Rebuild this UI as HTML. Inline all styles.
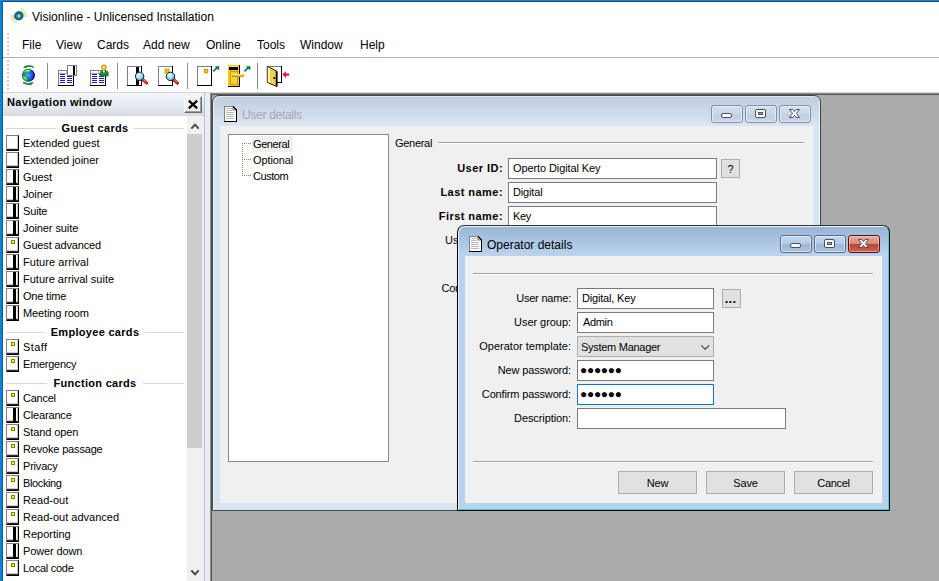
<!DOCTYPE html>
<html lang="en">
<head>
<meta charset="utf-8">
<title>Visionline - Unlicensed Installation</title>
<style>
*{box-sizing:border-box;margin:0;padding:0}
html,body{width:939px;height:581px;overflow:hidden;background:#ababab}
body{position:relative;font-family:"Liberation Sans",Arial,sans-serif;font-size:11px;color:#000;line-height:1}
.abs{position:absolute}
/* frame */
#bt{left:0;top:0;width:939px;height:1px;background:#1883d7}
#bt2{left:0;top:1px;width:939px;height:1px;background:#0b4f8f}
#bl{left:0;top:0;width:2px;height:581px;background:#0a82da}
#bl2{left:2px;top:1px;width:1px;height:580px;background:#145a86}
#cap{left:3px;top:2px;width:936px;height:91px;background:#fff}
#title{left:32px;top:10px;font-size:12px;line-height:14px;white-space:nowrap}
#menu{left:0;top:38px;font-size:12px;line-height:14px;white-space:nowrap}
#menu span{position:absolute;top:0}
#mline{left:3px;top:57px;width:936px;height:1px;background:#adadad}
.grip{width:2px;left:7px;background:repeating-linear-gradient(to bottom,#d2d2d2 0,#c2c2c2 2px,#fff 2px,#fff 4px)}
.tsep{width:1px;top:63px;height:26px;background:#8c8c8c}
#tbline{left:3px;top:92px;width:936px;height:1px;background:#d4d4d4}
/* nav */
#nav{left:3px;top:93px;width:201px;height:488px;background:#fff}
#navh{left:3px;top:93px;width:201px;height:23px;background:linear-gradient(#f3f5f9,#e4e8ef 60%,#d5dae3)}
#navt{left:7px;top:96px;font-weight:bold;line-height:13px;letter-spacing:.33px;white-space:nowrap}
#navx{left:184px;top:96px;width:18px;height:17px;background:#f0f0f0;border:1px solid;border-color:#fff #696969 #696969 #fff;box-shadow:inset -1px -1px 0 #a0a0a0}
#sb{left:187px;top:116px;width:17px;height:465px;background:#f0f0f0}
#sbt{left:187px;top:134px;width:15px;height:314px;background:#cdcdcd}
#split{left:204px;top:93px;width:6px;height:488px;background:#eaeef4;border-left:1px solid #b4c0cf}
#mdib{left:210px;top:93px;width:729px;height:488px;border-left:1px solid #8c8c8c;border-top:1px solid #8e8e8e}
#mdit{left:211px;top:94px;width:728px;height:487px;border-left:1px solid #555;border-top:1px solid #595959}
.ni{position:absolute;left:6px;height:16px;width:180px;white-space:nowrap}
.ic{position:absolute;left:0;top:0;width:13px;height:16px;background:#fff;border:1px solid;border-color:#808080 #000 #000 #808080;box-shadow:inset 0 -1px 0 #2c2c2c,inset -1px -2px 0 #c8c8c8}
.ic.st:after{content:"";position:absolute;left:6px;top:0;width:3px;height:14px;background:#000}
.ic.yl:after{content:"";position:absolute;left:4px;top:2px;width:2px;height:2px;background:#ff0;border:1px solid #808000}
.nt{position:absolute;left:17px;top:2px;line-height:13px}
.nh{position:absolute;left:6px;width:178px;height:16px;display:flex;align-items:center;white-space:nowrap}
.nh b{padding:0 6px;letter-spacing:.3px;line-height:13px}
.nh i{flex:1;height:1px;background:#d8d8d8}
/* windows */
.win{position:absolute;border-radius:7px 7px 0 0}
#uw{left:212px;top:95px;width:609px;height:416px;border:1px solid #454545;background:linear-gradient(#c0cddf 0,#dbe5f2 30px,#d7e4f2 30px);box-shadow:inset 1px 1px 0 rgba(255,255,255,.55),inset -1px 0 0 rgba(255,255,255,.55)}
#uwc{left:220px;top:126px;width:593px;height:377px;background:#f0f0f0}
#ow{left:457px;top:225px;width:433px;height:286px;border:1px solid #000;border-top-color:#333;background:linear-gradient(#98b4d6 0,#bcd4ee 30px,#b9d1ea 30px);box-shadow:inset 1px 1px 0 #e8f0fa,inset -1px -1px 0 #35cfea}
#owc{left:465px;top:256px;width:417px;height:247px;background:#f0f0f0}
.wt{position:absolute;font-size:12px;line-height:14px;white-space:nowrap}
.cb{position:absolute;height:18px;width:32px;border:1px solid #7d8ba3;border-radius:3px}
.inp{position:absolute;height:21px;background:#fff;border:1px solid #7a7a7a;padding:0 0 0 4px;line-height:19px;white-space:nowrap;overflow:hidden}
.lbl{position:absolute;white-space:nowrap;line-height:13px;text-align:right}
.btn{position:absolute;background:#e1e1e1;border:1px solid #adadad;text-align:center;white-space:nowrap}
.hl{position:absolute;height:1px;background:#a0a0a0;box-shadow:0 1px 0 #fff}

.cb i{position:absolute;display:block}
.cb.a{border-color:#5b6b86;background:linear-gradient(#c3d6ee 0,#b4cbe7 48%,#9db8d8 52%,#a9c3e2 100%);box-shadow:inset 0 0 0 1px rgba(255,255,255,.55)}
.cb.x{border-color:#4c1418;background:linear-gradient(#e3a99b 0,#d88a78 48%,#c2432a 52%,#d0664e 100%);box-shadow:inset 0 0 0 1px rgba(255,255,255,.4)}
.cb.i{border-color:#8290ad;background:linear-gradient(#d3deed 0,#cbd8ea 48%,#bfcfe4 52%,#c9d6e9 100%);box-shadow:inset 0 0 0 1px rgba(255,255,255,.5)}
.gmin{left:9px;top:7px;width:11px;height:5px;background:#fff;border:1px solid #4a4e58;border-radius:2px}
.gmax{left:9px;top:3px;width:11px;height:9px;background:#fff;border:1px solid #4a4e58;border-radius:2px}
.gmax:after{content:"";position:absolute;left:2px;top:2px;width:3px;height:1px;border:1px solid #4a4e58;background:#9db8d8}
.tree{position:absolute;left:228px;top:134px;width:161px;height:328px;background:#fff;border:1px solid #828790}
.tl{position:absolute;white-space:nowrap;line-height:13px}
.pw{font-size:12px;letter-spacing:-.3px;line-height:18px}
</style>
</head>
<body>
<div class="abs" id="cap"></div>
<div class="abs" id="bt"></div><div class="abs" id="bt2"></div>
<div class="abs" id="bl"></div><div class="abs" id="bl2"></div>

<svg class="abs" style="left:9px;top:6px" width="22" height="20" viewBox="9 6 22 20">
<defs><radialGradient id="lg" cx="50%" cy="52%" r="50%"><stop offset="0" stop-color="#f0f86a"/><stop offset=".2" stop-color="#cfe25a"/><stop offset=".36" stop-color="#2f8f9c"/><stop offset=".75" stop-color="#1d5590"/><stop offset="1" stop-color="#2b8b98"/></radialGradient></defs>
<g fill="none" stroke="#aec52e" stroke-width=".5" stroke-linecap="round">
<path d="M20.53 10.47 A5.6 5.6 0 0 1 24.37 16.39" opacity="0.95"/><path d="M17.07 21.13 A5.6 5.6 0 0 1 13.23 15.21" opacity="0.95"/>
<path d="M20.90 9.33 A6.8 6.8 0 0 1 25.56 16.51" opacity="0.85"/><path d="M16.70 22.27 A6.8 6.8 0 0 1 12.04 15.09" opacity="0.85"/>
<path d="M21.27 8.19 A8.0 8.0 0 0 1 26.76 16.64" opacity="0.75"/><path d="M16.33 23.41 A8.0 8.0 0 0 1 10.84 14.96" opacity="0.75"/>
</g>
<ellipse cx="18.8" cy="15.8" rx="4.900" ry="4.600" transform="rotate(-30 18.8 15.8)" fill="url(#lg)"/>
</svg>
<div class="abs" id="title">Visionline - Unlicensed Installation</div>
<div class="abs" id="menu">
<span style="left:22px">File</span><span style="left:56px">View</span><span style="left:97px">Cards</span><span style="left:143px">Add new</span><span style="left:206px">Online</span><span style="left:257px">Tools</span><span style="left:300px">Window</span><span style="left:360px">Help</span>
</div>
<div class="abs" id="mline"></div>
<div class="abs grip" style="top:33px;height:22px"></div>
<div class="abs grip" style="top:60px;height:30px"></div>
<div class="abs tsep" style="left:47px"></div>
<div class="abs tsep" style="left:117px"></div>
<div class="abs tsep" style="left:187px"></div>
<div class="abs tsep" style="left:257px"></div>
<!--TOOLBAR-START-->
<svg class="abs" style="left:0;top:60px" width="300" height="32" viewBox="0 60 300 32">
<defs>
<radialGradient id="gl" cx="42%" cy="48%" r="62%"><stop offset="0" stop-color="#3fb4ff"/><stop offset=".5" stop-color="#1e6cf8"/><stop offset=".85" stop-color="#1226d8"/><stop offset="1" stop-color="#0a0f70"/></radialGradient>
<radialGradient id="lens" cx="40%" cy="35%" r="70%"><stop offset="0" stop-color="#f4fcff"/><stop offset=".6" stop-color="#8fd8f8"/><stop offset="1" stop-color="#3aa0e0"/></radialGradient>
<pattern id="hatch" width="2" height="2" patternUnits="userSpaceOnUse"><rect width="2" height="2" fill="#f2c200"/><rect width="1" height="1" fill="#f6e28a"/><rect x="1" y="1" width="1" height="1" fill="#f6e28a"/></pattern>
<g id="tbl" shape-rendering="crispEdges">
<rect x="0" y="0" width="16" height="16" fill="#000"/>
<rect x="0" y="0" width="15" height="15" fill="#808080"/>
<rect x="1" y="1" width="14" height="14" fill="#ffffc8"/>
<rect x="1" y="1" width="14" height="1.500" fill="#fff"/>
<rect x="1" y="2.500" width="14" height="1" fill="#a8a8a8"/>
<rect x="8" y="1" width="1" height="2" fill="#a8a8a8"/>
<g fill="#0a1cff"><rect x="2" y="4" width="5" height="1"/><rect x="2" y="6" width="5" height="1"/><rect x="2" y="8" width="5" height="1.300"/><rect x="2" y="10" width="5" height="1.300"/><rect x="2" y="12" width="5" height="1"/>
<rect x="8.500" y="4" width="5" height="1"/><rect x="8.500" y="6" width="5" height="1"/><rect x="8.500" y="8" width="5" height="1.300"/><rect x="8.500" y="10" width="5" height="1.300"/><rect x="8.500" y="12" width="5" height="1"/></g>
</g>
<g id="card" shape-rendering="crispEdges">
<rect x="0" y="0" width="15" height="20" fill="#000"/>
<rect x="0" y="0" width="14" height="19" fill="#808080"/>
<rect x="1" y="1" width="13" height="18" fill="#fff"/>
</g>
<g id="mag">
<line x1="3" y1="3" x2="7" y2="6.700" stroke="#8a0010" stroke-width="3" stroke-linecap="round"/>
<line x1="3" y1="3" x2="6.900" y2="6.600" stroke="#ff2030" stroke-width="1.700" stroke-linecap="round"/>
<line x1="3.600" y1="2.800" x2="7" y2="5.900" stroke="#ffd800" stroke-width=".7"/>
<circle cx="0" cy="0" r="4.2" fill="url(#lens)" stroke="#1a1a1a" stroke-width="1"/>
</g>
<g id="garrow"><path d="M0 5.2 L4.6 .8" stroke="#14806a" stroke-width="1.8" fill="none"/><path d="M1.6 0 L6 0 L6 4.4 Z" fill="#10783c"/></g>
</defs>
<!-- globe -->
<circle cx="28.400" cy="75.300" r="6.400" fill="url(#gl)"/>
<path d="M31.600 69.900 A6.400 6.400 0 0 1 31.400 80.900 A8.500 8.500 0 0 0 31.600 69.900Z" fill="#05063a" opacity=".85"/>
<path d="M23.500 71.900 C24.300 69.700 27.500 68.700 30.700 69.500 C31.400 70.600 30.500 71.900 28.700 72.700 C27 73.500 24.900 73.700 23.500 71.900Z" fill="#4fd84a" stroke="#0b6a12" stroke-width=".7"/>
<path d="M25.200 70.600 C26.600 69.800 28.400 69.700 29.600 70.200 C28.600 71.100 26.600 71.500 25.200 70.600Z" fill="#d8ffd0"/>
<path d="M22.300 75.300 C24 74.900 26.100 76 27.600 78 C28.500 79.400 28 81 26.700 81.500 C24.400 80.700 22.700 78.500 22.300 75.300Z" fill="#3fcc3a" stroke="#0b6a12" stroke-width=".7"/>
<path d="M23.300 76.400 C24.400 76.500 25.400 77.300 25.800 78.600 C24.600 78.500 23.600 77.700 23.300 76.400Z" fill="#e4ffd8"/>
<path d="M24.600 67.400 Q28.600 64.900 33.600 67.300" stroke="#0e6f66" stroke-width="1.300" fill="none"/>
<path d="M24.600 66.800 Q28.600 64.500 33.300 66.600" stroke="#2c9c1c" stroke-width="1" fill="none"/>
<path d="M22.800 68.300 L26.600 64.900 L27 67.500 Z" fill="#1f8a2a"/>
<path d="M23.200 82.600 Q28 85.500 32.400 83.400" stroke="#0e6f66" stroke-width="1.300" fill="none"/>
<path d="M23 82.200 Q28 85 32.400 82.900" stroke="#2c9c1c" stroke-width="1" fill="none"/>
<path d="M34.100 81.900 L30.300 85.400 L29.900 82.800 Z" fill="#1f8a2a"/>
<!-- list + card -->
<use href="#tbl" x="58" y="70"/>
<g shape-rendering="crispEdges"><rect x="67" y="65" width="10" height="11" fill="#808080"/><rect x="68" y="66" width="8" height="9" fill="#fff"/><rect x="73" y="66" width="2" height="9" fill="#000"/></g>
<!-- list + person -->
<use href="#tbl" x="90" y="70"/>
<path d="M100.300 76 v-3.200 q0-1.600 1.600-1.600 h4.600 q1.600 0 1.600 1.600 v3.200z" fill="#1f8f2c" stroke="#0d5f5a" stroke-width=".8"/>
<rect x="103" y="69.500" width="1.800" height="3" fill="#ffe680"/>
<circle cx="103.900" cy="67.300" r="2.200" fill="#ffe27a" stroke="#d09a00" stroke-width="1.200"/>
<!-- card search (stripe) -->
<use href="#card" x="127" y="66"/>
<rect x="136" y="67" width="3" height="18" fill="#000" shape-rendering="crispEdges"/>
<use href="#mag" x="139.600" y="76.300"/>
<!-- card search (chip) -->
<use href="#card" x="158" y="66"/>
<rect x="165" y="69" width="4" height="4" fill="#ffc20a" stroke="#c89200" stroke-width=".8"/>
<use href="#mag" x="170.500" y="76.400"/>
<!-- card + arrow -->
<use href="#card" x="197" y="66"/>
<rect x="204.400" y="69.400" width="3.400" height="3.400" fill="#ffc20a" stroke="#c89200" stroke-width=".9"/>
<use href="#garrow" x="213.200" y="66.200"/>
<!-- lock + arrow -->
<g shape-rendering="crispEdges">
<rect x="228" y="65" width="12" height="22" fill="#000"/>
<rect x="228" y="65" width="11" height="21" fill="#ffc800"/>
<rect x="229" y="66" width="9" height="1" fill="#ffe680"/>
<rect x="229" y="67" width="9" height="3" fill="#000"/>
<rect x="230" y="71" width="8" height="14" fill="#c8a000"/>
<rect x="231" y="72" width="6" height="12" fill="url(#hatch)"/>
<rect x="232" y="74" width="11" height="3" fill="#c89600"/>
<rect x="232" y="74" width="11" height="1" fill="#fff0a0"/>
<rect x="233" y="75" width="10" height="1" fill="#ffc800"/>
</g>
<path d="M243 74 l1.600 1.500 l-1.600 1.500z" fill="#c89600"/>
<use href="#garrow" x="244.300" y="66.200"/>
<!-- door -->
<g shape-rendering="crispEdges"><rect x="268" y="66" width="14" height="17" fill="#000"/><rect x="268" y="66" width="13" height="16" fill="#808080"/><rect x="269" y="67" width="12" height="15" fill="#fff"/></g>
<path d="M267.300 66.300 L276.800 71.200 L276.800 86.500 L267.300 82.400 Z" fill="url(#hatch)" stroke="#000" stroke-width=".9"/>
<path d="M267.800 67.200 L270 68.300 L270 83 L267.800 82z" fill="#fff3a0"/>
<path d="M276.600 71.200V86.300" stroke="#000" stroke-width="1.700"/><circle cx="274.300" cy="78" r="1.100" fill="#000"/>
<path d="M282.300 74.500 L286 71.200 L286 73.400 L289.200 73.400 L289.200 75.800 L286 75.800 L286 78 Z" fill="#e8105c"/>
</svg>
<!--TOOLBAR-END-->
<div class="abs" id="tbline"></div>

<div class="abs" id="nav"></div>
<div class="abs" id="navh"></div>
<div class="abs" id="navt">Navigation window</div>
<div class="abs" id="navx"></div>
<svg class="abs" style="left:187px;top:99px" width="12" height="11" viewBox="0 0 12 11"><path d="M1.800 1.600L10.200 9.400M10.200 1.600L1.800 9.400" stroke="#000" stroke-width="2.200" fill="none"/></svg>
<div class="nh" style="top:120px"><i></i><b>Guest cards</b><i></i></div>
<div class="ni" style="top:135px"><span class="ic"></span><span class="nt">Extended guest</span></div>
<div class="ni" style="top:152px"><span class="ic"></span><span class="nt" style="letter-spacing:-0.04px">Extended joiner</span></div>
<div class="ni" style="top:169px"><span class="ic st"></span><span class="nt" style="letter-spacing:-0.1px">Guest</span></div>
<div class="ni" style="top:186px"><span class="ic st"></span><span class="nt" style="letter-spacing:-0.13px">Joiner</span></div>
<div class="ni" style="top:203px"><span class="ic st"></span><span class="nt" style="letter-spacing:-0.16px">Suite</span></div>
<div class="ni" style="top:220px"><span class="ic st"></span><span class="nt" style="letter-spacing:-0.09px">Joiner suite</span></div>
<div class="ni" style="top:237px"><span class="ic yl"></span><span class="nt" style="letter-spacing:-0.15px">Guest advanced</span></div>
<div class="ni" style="top:254px"><span class="ic st"></span><span class="nt" style="letter-spacing:0.06px">Future arrival</span></div>
<div class="ni" style="top:271px"><span class="ic st"></span><span class="nt">Future arrival suite</span></div>
<div class="ni" style="top:288px"><span class="ic st"></span><span class="nt" style="letter-spacing:-0.19px">One time</span></div>
<div class="ni" style="top:305px"><span class="ic st"></span><span class="nt" style="letter-spacing:-0.12px">Meeting room</span></div>
<div class="nh" style="top:324px"><i></i><b>Employee cards</b><i></i></div>
<div class="ni" style="top:339px"><span class="ic yl"></span><span class="nt" style="letter-spacing:0.4px">Staff</span></div>
<div class="ni" style="top:356px"><span class="ic yl"></span><span class="nt" style="letter-spacing:-0.27px">Emergency</span></div>
<div class="nh" style="top:375px"><i></i><b>Function cards</b><i></i></div>
<div class="ni" style="top:390px"><span class="ic yl"></span><span class="nt" style="letter-spacing:-0.25px">Cancel</span></div>
<div class="ni" style="top:407px"><span class="ic st"></span><span class="nt" style="letter-spacing:-0.17px">Clearance</span></div>
<div class="ni" style="top:424px"><span class="ic yl"></span><span class="nt" style="letter-spacing:-0.09px">Stand open</span></div>
<div class="ni" style="top:441px"><span class="ic yl"></span><span class="nt" style="letter-spacing:-0.17px">Revoke passage</span></div>
<div class="ni" style="top:458px"><span class="ic yl"></span><span class="nt" style="letter-spacing:-0.2px">Privacy</span></div>
<div class="ni" style="top:475px"><span class="ic yl"></span><span class="nt" style="letter-spacing:-0.38px">Blocking</span></div>
<div class="ni" style="top:492px"><span class="ic yl"></span><span class="nt">Read-out</span></div>
<div class="ni" style="top:509px"><span class="ic yl"></span><span class="nt">Read-out advanced</span></div>
<div class="ni" style="top:526px"><span class="ic st"></span><span class="nt">Reporting</span></div>
<div class="ni" style="top:543px"><span class="ic st"></span><span class="nt" style="letter-spacing:-0.12px">Power down</span></div>
<div class="ni" style="top:560px"><span class="ic yl"></span><span class="nt" style="letter-spacing:-0.27px">Local code</span></div>
<div class="abs" id="sb"></div>
<div class="abs" id="sbt"></div>
<svg class="abs" style="left:190px;top:122px" width="10" height="8" viewBox="0 0 10 8"><path d="M1.300 6.600L5 2.600L8.700 6.600" stroke="#484848" stroke-width="2" fill="none"/></svg>
<svg class="abs" style="left:190px;top:569px" width="10" height="8" viewBox="0 0 10 8"><path d="M1.300 1.400L5 5.400L8.700 1.400" stroke="#484848" stroke-width="2" fill="none"/></svg>
<div class="abs" id="split"></div>
<div class="abs" id="mdib"></div><div class="abs" id="mdit"></div>

<!-- User details window -->
<div class="win" id="uw"></div>
<div class="abs" id="uwc"></div>

<svg class="abs" style="left:224px;top:106px" width="13" height="16" viewBox="0 0 13 16" shape-rendering="crispEdges"><path d="M0 0H9L13 4V16H0Z" fill="#000"/><path d="M0 0H9V1H1V15H0Z" fill="#808080"/><path d="M1 1H9V4H12V15H1Z" fill="#fff"/><path d="M9 1L12 4H9Z" fill="#fff" stroke="#000" stroke-width=".6" shape-rendering="auto"/><path d="M2 2h6v1h-6zM2 4h6v1h-6zM2 6h8v1h-8zM2 8h8v1h-8zM2 10h8v1h-8zM2 12h8v1h-8z" fill="#bdbdbd"/></svg>
<div class="cb i" style="left:711px;top:105px"><i class="gmin"></i></div>
<div class="cb i" style="left:745px;top:105px"><i class="gmax"></i></div>
<div class="cb i" style="left:779px;top:105px"><svg style="position:absolute;left:8px;top:2px" width="13" height="11" viewBox="0 0 13 11"><path d="M1.500 1.500 L4.800 1.500 L6.500 3.600 L8.200 1.500 L11.500 1.500 L8.400 5.500 L11.500 9.500 L8.200 9.500 L6.500 7.400 L4.800 9.500 L1.500 9.500 L4.600 5.500 Z" fill="#fff" stroke="#4a4e58" stroke-width="1" stroke-linejoin="round"/></svg></div>
<div class="tree"></div>
<div class="abs" style="left:252px;top:136px;width:41px;height:16px;background:#f0f0f0"></div>
<svg class="abs" style="left:242px;top:143px" width="12" height="34" viewBox="0 0 12 34" shape-rendering="crispEdges"><path d="M.5 0V33M0 .5H9M0 16.500H9M0 32.500H9" stroke="#808080" stroke-width="1" stroke-dasharray="1 1" fill="none"/></svg>
<div class="tl" style="left:253px;top:138px;letter-spacing:-.4px">General</div>
<div class="tl" style="left:253px;top:154px;letter-spacing:-.1px">Optional</div>
<div class="tl" style="left:253px;top:170px;letter-spacing:-.45px">Custom</div>
<div class="tl" style="left:395px;top:137px;letter-spacing:-.3px">General</div>
<div class="hl" style="left:438px;top:142px;width:366px"></div>
<div class="lbl" style="left:400px;width:103px;top:162px;font-weight:bold;letter-spacing:.45px">User ID:</div>
<div class="lbl" style="left:400px;width:103px;top:186px;font-weight:bold;letter-spacing:.45px">Last name:</div>
<div class="lbl" style="left:400px;width:103px;top:210px;font-weight:bold;letter-spacing:.45px">First name:</div>
<div class="tl" style="left:445px;top:234px">User group:</div>
<div class="tl" style="left:441.500px;top:282px;letter-spacing:-.3px">Comment:</div>
<div class="inp" style="left:508px;top:158px;width:209px;letter-spacing:-.1px">Operto Digital Key</div>
<div class="inp" style="left:508px;top:182px;width:209px;letter-spacing:-.15px">Digital</div>
<div class="inp" style="left:508px;top:206px;width:209px;letter-spacing:-.4px">Key</div>
<div class="btn" style="left:721px;top:159px;width:19px;height:19px;line-height:18px">?</div>
<div class="wt" style="left:242px;top:108px;color:#a4a6b2;letter-spacing:-.3px">User details</div>

<!-- Operator details window -->
<div class="win" id="ow"></div>
<div class="abs" id="owc"></div>

<svg class="abs" style="left:469px;top:236px" width="13" height="16" viewBox="0 0 13 16" shape-rendering="crispEdges"><path d="M0 0H9L13 4V16H0Z" fill="#000"/><path d="M0 0H9V1H1V15H0Z" fill="#808080"/><path d="M1 1H9V4H12V15H1Z" fill="#fff"/><path d="M9 1L12 4H9Z" fill="#fff" stroke="#000" stroke-width=".6" shape-rendering="auto"/><path d="M2 2h6v1h-6zM2 4h6v1h-6zM2 6h8v1h-8zM2 8h8v1h-8zM2 10h8v1h-8zM2 12h8v1h-8z" fill="#bdbdbd"/></svg>
<div class="cb a" style="left:780px;top:235px"><i class="gmin"></i></div>
<div class="cb a" style="left:814px;top:235px"><i class="gmax"></i></div>
<div class="cb x" style="left:848px;top:235px"><svg style="position:absolute;left:8px;top:2px" width="13" height="11" viewBox="0 0 13 11"><path d="M1.500 1.500 L4.800 1.500 L6.500 3.600 L8.200 1.500 L11.500 1.500 L8.400 5.500 L11.500 9.500 L8.200 9.500 L6.500 7.400 L4.800 9.500 L1.500 9.500 L4.600 5.500 Z" fill="#fff" stroke="#4a4e58" stroke-width="1" stroke-linejoin="round"/></svg></div>
<div class="hl" style="left:473px;top:273px;width:400px"></div>
<div class="lbl" style="left:470px;width:101px;top:292px;letter-spacing:-0.2px">User name:</div>
<div class="lbl" style="left:470px;width:101px;top:316px;letter-spacing:-0.05px">User group:</div>
<div class="lbl" style="left:470px;width:101px;top:340px;letter-spacing:0px">Operator template:</div>
<div class="lbl" style="left:470px;width:101px;top:364px;letter-spacing:-0.15px">New password:</div>
<div class="lbl" style="left:470px;width:101px;top:388px;letter-spacing:-0.15px">Confirm password:</div>
<div class="lbl" style="left:470px;width:101px;top:412px;letter-spacing:-0.1px">Description:</div>
<div class="inp" style="left:577px;top:288px;width:137px;letter-spacing:-.18px">Digital, Key</div>
<div class="btn" style="left:722px;top:289px;width:19px;height:19px;line-height:17px;letter-spacing:.3px;font-size:13px;font-weight:bold;padding-right:2px">...</div>
<div class="inp" style="left:577px;top:312px;width:137px;letter-spacing:-.35px;padding-left:5px">Admin</div>
<div class="inp" style="left:577px;top:336px;width:137px;background:#e1e1e1;border-color:#adadad;padding-left:3px;letter-spacing:-.28px;line-height:21px">System Manager<svg style="position:absolute;right:3px;top:7px" width="11" height="7" viewBox="0 0 11 7"><path d="M2.300 1.300L6.200 5.200L10.100 1.300" stroke="#404040" stroke-width="1.100" fill="none"/></svg></div>
<div class="inp pw" style="left:577px;top:360px;width:137px;padding-left:2px">&#9679;&#9679;&#9679;&#9679;&#9679;&#9679;</div>
<div class="inp pw" style="left:577px;top:384px;width:137px;padding-left:2px;border-color:#0078d7">&#9679;&#9679;&#9679;&#9679;&#9679;&#9679;</div>
<div class="inp" style="left:577px;top:408px;width:209px"></div>
<div class="hl" style="left:473px;top:461px;width:400px"></div>
<div class="btn" style="left:618px;top:471px;width:79px;height:23px;line-height:22px;letter-spacing:-.2px">New</div>
<div class="btn" style="left:706px;top:471px;width:79px;height:23px;line-height:22px;letter-spacing:-.2px">Save</div>
<div class="btn" style="left:794px;top:471px;width:79px;height:23px;line-height:22px;letter-spacing:-.3px">Cancel</div>
<div class="wt" style="left:487px;top:238px">Operator details</div>

</body>
</html>
